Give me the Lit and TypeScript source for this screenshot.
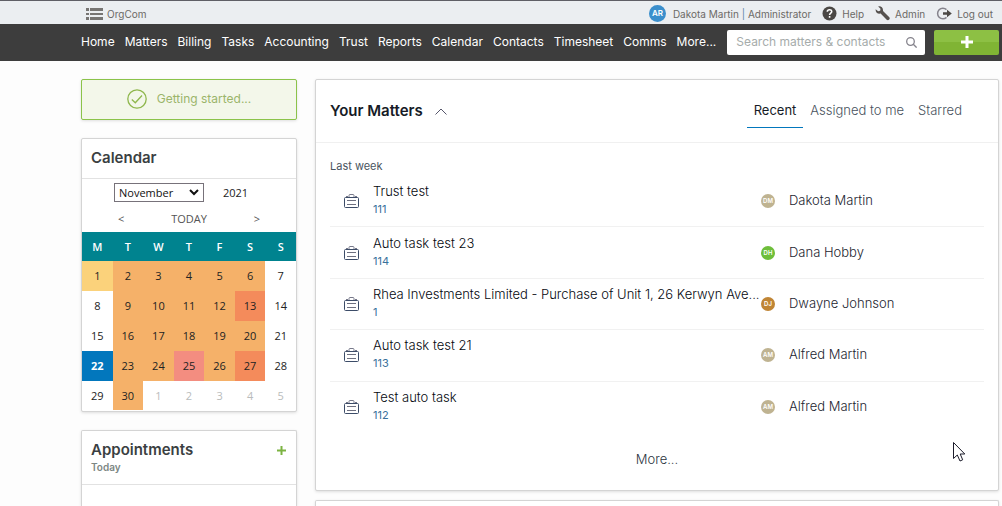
import { LitElement, html, css, svg } from "lit";
import { customElement, state } from "lit/decorators.js";
import { classMap } from "lit/directives/class-map.js";

interface Matter {
  title: string;
  ref: string;
  initials: string;
  owner: string;
  tone: string;
}

const NAV = ["Home", "Matters", "Billing", "Tasks", "Accounting", "Trust", "Reports", "Calendar", "Contacts", "Timesheet", "Comms", "More..."];

const MATTERS: Matter[] = [
  { title: "Trust test", ref: "111", initials: "DM", owner: "Dakota Martin", tone: "sand" },
  { title: "Auto task test 23", ref: "114", initials: "DH", owner: "Dana Hobby", tone: "green" },
  { title: "Rhea Investments Limited - Purchase of Unit 1, 26 Kerwyn Ave...", ref: "1", initials: "DJ", owner: "Dwayne Johnson", tone: "bronze" },
  { title: "Auto task test 21", ref: "113", initials: "AM", owner: "Alfred Martin", tone: "sand" },
  { title: "Test auto task", ref: "112", initials: "AM", owner: "Alfred Martin", tone: "sand" },
];

// Each day is paired with a workload level: n none, y light, o busy, r heavy, p critical, t today, x outside the month.
const WEEKS: string[][] = [
  ["1y", "2o", "3o", "4o", "5o", "6o", "7n"],
  ["8n", "9o", "10o", "11o", "12o", "13r", "14n"],
  ["15n", "16o", "17o", "18o", "19o", "20o", "21n"],
  ["22t", "23o", "24o", "25p", "26o", "27r", "28n"],
  ["29n", "30o", "1x", "2x", "3x", "4x", "5x"],
];

const MONTHS = ["January", "February", "March", "April", "May", "June", "July", "August", "September", "October", "November", "December"];

const shared = css`
  *, *::before, *::after { box-sizing: border-box; }
  a { color: inherit; text-decoration: none; }
  button, input, select { font: inherit; color: inherit; margin: 0; }
  button { background: none; border: 0; padding: 0; cursor: pointer; }
  h2 { margin: 0; font-size: 15px; line-height: 20px; font-weight: 600; }
  svg { display: block; flex: none; }
`;

@customElement("site-header")
class SiteHeader extends LitElement {
  static styles = [shared, css`
    :host { display: block; }
    .top {
      display: flex; align-items: center; height: 24px; padding: 2px 9px 0 86px;
      border-top: 1px solid #5f5f66; background: #ebeef1; color: #6c6a66; font-size: 10px; line-height: 16px;
    }
    .item { display: flex; align-items: center; gap: 5px; white-space: nowrap; }
    .org { gap: 4px; margin-right: auto; }
    .tools { display: flex; align-items: center; gap: 11px; }
    .who { gap: 7px; }
    .badge {
      width: 17px; height: 17px; border-radius: 50%; background: #3b8fcc; color: #fff;
      font-size: 8px; line-height: 17px; font-weight: 600; text-align: center;
    }
    .sep { color: #5b86a6; }
    .main {
      display: flex; align-items: center; height: 37px; padding: 0 3px 1px 81px;
      background: #3d3d3d; color: #fff; font-size: 12px; line-height: 16px;
    }
    .nav { display: flex; gap: 10px; white-space: nowrap; }
    .search {
      display: flex; align-items: center; flex: 1; min-width: 0; height: 25px; margin-left: 11px; padding: 0 8px 0 9px;
      border-radius: 2px; background: #fff;
    }
    .search input { flex: 1; min-width: 0; border: 0; padding: 0; background: none; outline: 0; color: #333; }
    .search input::placeholder { color: #a6acab; opacity: 1; }
    .add {
      display: flex; align-items: center; justify-content: center; flex: none; width: 65px; height: 25px; margin-left: 9px;
      border-radius: 2px; background: linear-gradient(#8dc044 50%, #80b434 50%);
    }
  `];

  render() {
    return html`
      <div class="top">
        <a class="item org" href="#">
          <svg width="17" height="12" viewBox="0 0 17 12" fill="#777573">
            <path d="M0 0h3v3H0zM4 0h13v3H4zM0 5h3v2H0zM4 5h13v2H4zM0 9h3v3H0zM4 9h13v3H4z" />
          </svg>
          OrgCom
        </a>
        <div class="tools">
          <a class="item who" href="#"><span class="badge">AR</span><span>Dakota Martin <span class="sep">|</span> Administrator</span></a>
          <a class="item" href="#">
            <svg width="15" height="15" viewBox="0 0 15 15"><circle cx="7.500" cy="7.500" r="7" fill="#4b4845" />
              <path d="M5.300 5.800C5.400 3 9.800 3.100 9.700 5.700 9.600 7.100 7.600 7.200 7.600 8.900M7.600 10.100v1.700" stroke="#fff" stroke-width="1.600" fill="none" /></svg>
            Help
          </a>
          <a class="item" href="#">
            <svg width="15" height="15" viewBox="0 0 15 15" fill="#55514e">
              <path d="M3.200.5C5.400-.3 8.400 1.400 8 5L14.300 11.200C15.700 12.900 13.400 15.200 11.700 13.800L5.600 7.500C2.600 8.200.2 6 .7 3.200L3.100 5.300 5.200 4.700 5.500 2.700z" />
            </svg>
            Admin
          </a>
          <a class="item" href="#">
            <svg width="16" height="13" viewBox="0 0 16 13" fill="none">
              <path d="M10.500 2.600A5.300 5.300 0 1 0 10.500 10.400" stroke="#85838c" stroke-width="1.500" />
              <path d="M7 5.300h4V2.800L15.800 6.500 11 10.200V7.700H7z" fill="#4b4845" />
            </svg>
            Log out
          </a>
        </div>
      </div>
      <div class="main">
        <nav class="nav">${NAV.map((n) => html`<a href="#">${n}</a>`)}</nav>
        <label class="search">
          <input type="text" aria-label="Search matters and contacts" placeholder="Search matters &amp; contacts" />
          <svg width="11" height="11" viewBox="0 0 11 11" fill="none" stroke="#85838c" stroke-width="1.300">
            <circle cx="4.500" cy="4.500" r="3.800" /><path d="M7.300 7.300L10.600 10.600" />
          </svg>
        </label>
        <button class="add" aria-label="Add">
          <svg width="12" height="12" viewBox="0 0 12 12" fill="#fff"><path d="M4.500 0h3v4.500H12v3H7.500V12h-3V7.500H0v-3h4.500z" /></svg>
        </button>
      </div>
    `;
  }
}

@customElement("month-calendar")
class MonthCalendar extends LitElement {
  static styles = [shared, css`
    :host { display: block; padding-bottom: 1px; font-family: "Open Sans", sans-serif; font-size: 11px; line-height: 16px; color: #222; }
    .pick { display: flex; align-items: center; padding: 4px 0 0 32px; gap: 19px; }
    .month {
      appearance: none; width: 90px; height: 19px; padding: 0 4px; border: 1px solid #77727a; border-radius: 0; color: #111;
      background: #fff url('data:image/svg+xml,<svg xmlns="http://www.w3.org/2000/svg" width="10" height="7"><path d="M1 1l4 4 4-4" fill="none" stroke="%23111" stroke-width="2"/></svg>') no-repeat right 4px center;
    }
    .year { width: 40px; border: 0; padding: 0; background: none; outline: 0; }
    .step { display: flex; align-items: center; justify-content: space-between; padding: 9px 36px 5px; color: #555; }
    .days { width: 100%; border-collapse: collapse; table-layout: fixed; text-align: center; }
    .days th { height: 29px; padding: 0; background: #00838f; color: #fff; font-weight: 600; }
    .days td { height: 30px; padding: 0; }
    .days tr:last-child td { height: 29px; }
    .y { background: #fbd27b; }
    .o { background: #f5b169; }
    .r { background: #f48b5b; }
    .p { background: #f38d80; }
    .t { background: #0277bd; color: #fff; font-weight: 700; }
    .x { color: #b9bcbc; }
  `];

  @state() private month = "November";

  render() {
    return html`
      <div class="pick">
        <select class="month" aria-label="Month" @change=${(e: Event) => (this.month = (e.target as HTMLSelectElement).value)}>
          ${MONTHS.map((m) => html`<option ?selected=${m === this.month}>${m}</option>`)}
        </select>
        <input class="year" type="text" aria-label="Year" value="2021" />
      </div>
      <div class="step">
        <button aria-label="Previous month">&lt;</button><button>TODAY</button><button aria-label="Next month">&gt;</button>
      </div>
      <table class="days">
        <thead><tr>${["M", "T", "W", "T", "F", "S", "S"].map((d) => html`<th scope="col">${d}</th>`)}</tr></thead>
        <tbody>
          ${WEEKS.map((w) => html`<tr>${w.map((d) => html`<td class=${d.slice(-1)}>${d.slice(0, -1)}</td>`)}</tr>`)}
        </tbody>
      </table>
    `;
  }
}

const briefcase = svg`
  <rect x="0.500" y="3.500" width="14" height="10" rx="1" stroke="#3c4c68" />
  <path d="M5 3V1.500Q5 .5 6 .5H9Q10 .5 10 1.500V3" stroke="#77798a" />
  <path d="M2 2.500H4M11 2.500H13" stroke="#77798a" />
  <path d="M3 6.500H12M3 10.500H12" stroke="#6e7080" />`;

@customElement("matters-panel")
class MattersPanel extends LitElement {
  static styles = [shared, css`
    :host { display: block; color: #1d2530; font-size: 13px; line-height: 18px; }
    .head { display: flex; align-items: center; justify-content: space-between; height: 63px; padding: 0 29px 0 14px; border-bottom: 1px solid #f0f0f0; }
    .title { display: flex; align-items: center; gap: 12px; color: #161b26; }
    .tabs { display: flex; align-items: center; }
    .tab { padding: 7px 7px 8px; border-bottom: 1px solid transparent; color: #48525d; font-weight: 300; white-space: nowrap; }
    .tab.on { border-color: #0277bd; color: #161b26; font-weight: 400; }
    .body { padding: 15px 14px 22px; }
    .period { padding-bottom: 2px; color: #4a5560; font-size: 11px; line-height: 16px; }
    .list { display: grid; grid-auto-rows: 1fr; min-height: 257px; margin: 0; padding: 0; list-style: none; }
    .row {
      display: grid; grid-template-columns: 29px minmax(0, 388fr) 15px minmax(0, 208fr); align-items: center;
      padding-left: 14px; border-bottom: 1px solid #f1f1f1;
    }
    .row:last-child { border-bottom-color: transparent; }
    .matter { padding-bottom: 2px; }
    .name { display: block; overflow: hidden; text-overflow: ellipsis; white-space: nowrap; color: #05080f; font-weight: 300; }
    .ref { display: block; color: #39719c; font-size: 11px; line-height: 18px; }
    .dot {
      width: 14px; height: 14px; border-radius: 50%; color: #fff;
      font-size: 6px; line-height: 14px; font-weight: 600; text-align: center;
    }
    .sand { background: #bfb391; }
    .green { background: #6ebe3b; }
    .bronze { background: #c08535; }
    .owner { padding: 0 0 2px 13px; font-weight: 300; white-space: nowrap; }
    .more { display: block; margin: 17px auto 0; color: #2c343e; font-weight: 300; }
  `];

  @state() private tab = "Recent";

  render() {
    return html`
      <div class="head">
        <div class="title">
          <h2>Your Matters</h2>
          <svg width="12" height="7" viewBox="0 0 12 7" fill="none" stroke="#55556a"><path d="M.5 6.500L6 1l5.500 5.500" /></svg>
        </div>
        <div class="tabs">
          ${["Recent", "Assigned to me", "Starred"].map((t) => html`
            <button class=${classMap({ tab: true, on: t === this.tab })} @click=${() => (this.tab = t)}>${t}</button>`)}
        </div>
      </div>
      <div class="body">
        <div class="period">Last week</div>
        <ul class="list">
          ${MATTERS.map((m) => html`
            <li class="row">
              <svg width="15" height="14" viewBox="0 0 15 14" fill="none">${briefcase}</svg>
              <a class="matter" href="#"><span class="name">${m.title}</span><span class="ref">${m.ref}</span></a>
              <span class="dot ${m.tone}">${m.initials}</span>
              <span class="owner">${m.owner}</span>
            </li>`)}
        </ul>
        <button class="more">More...</button>
      </div>
    `;
  }
}

@customElement("app-root")
class AppRoot extends LitElement {
  static styles = [shared, css`
    :host {
      display: flex; flex-direction: column; position: relative; height: 100vh; overflow: hidden;
      background: #fdfdfd; font-family: Inter, sans-serif; color: #3b3f42;
    }
    site-header { flex: none; }
    .page { flex: 1; min-height: 0; display: grid; grid-template-columns: 216px minmax(0, 1fr); gap: 18px; padding: 18px 3px 0 81px; }
    .side, .content { display: flex; flex-direction: column; min-height: 0; }
    .side { gap: 18px; }
    .content { gap: 9px; }
    .card { flex: none; border: 1px solid #d4d4d4; border-radius: 2px; background: #fff; box-shadow: 0 1px 3px rgba(0, 0, 0, 0.12); }
    .open { flex: 1 0 0; border-bottom: 0; border-radius: 2px 2px 0 0; }
    .start {
      display: flex; align-items: center; justify-content: center; gap: 10px; flex: none; height: 41px;
      padding-bottom: 1px; border: 1px solid #8bc34a; border-radius: 2px; background: #f3f7ea; color: #9bb56a;
      font-size: 12px; line-height: 16px; box-shadow: 0 1px 3px rgba(0, 0, 0, 0.12);
    }
    .cardhead { display: flex; align-items: center; justify-content: space-between; padding: 9px 9px 10px; border-bottom: 1px solid #e2e2e2; }
    .sub { display: block; color: #7d8784; font-size: 10px; line-height: 14px; font-weight: 600; }
    .plus { display: flex; align-self: flex-start; padding: 6px 1px; }
    .cursor { position: absolute; left: 953px; top: 442px; }
  `];

  render() {
    return html`
      <site-header></site-header>
      <main class="page">
        <div class="side">
          <button class="start">
            <svg width="20" height="20" viewBox="0 0 20 20" fill="none" stroke="#8fb74d" stroke-width="1.300">
              <circle cx="10" cy="10" r="9.200" /><path d="M4.800 10.500L8.300 13.800 15 6.500" />
            </svg>
            Getting started...
          </button>
          <section class="card">
            <div class="cardhead"><h2>Calendar</h2></div>
            <month-calendar></month-calendar>
          </section>
          <section class="card open">
            <div class="cardhead">
              <div><h2>Appointments</h2><span class="sub">Today</span></div>
              <button class="plus" aria-label="Add appointment">
                <svg width="9" height="9" viewBox="0 0 9 9" fill="#7cb342"><path d="M3.500 0h2v3.500H9v2H5.500V9h-2V5.500H0v-2h3.500z" /></svg>
              </button>
            </div>
          </section>
        </div>
        <div class="content">
          <section class="card"><matters-panel></matters-panel></section>
          <section class="card open"></section>
        </div>
      </main>
      <svg class="cursor" width="13" height="20" viewBox="0 0 13 20" fill="#fff" stroke="#1b1b2a">
        <path d="M.5.500V16.500L4.300 13 7 19 9.700 17.800 7.200 12H11.800z" />
      </svg>
    `;
  }
}
